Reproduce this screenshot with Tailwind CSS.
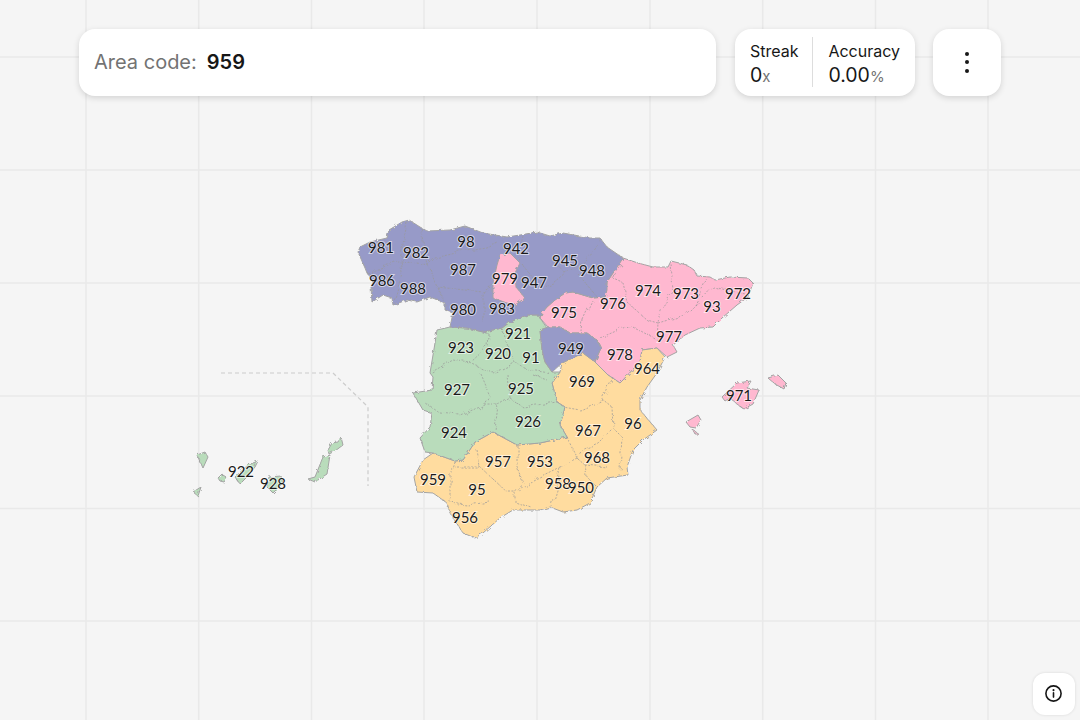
<!DOCTYPE html>
<html lang="en">
<head>
  <meta charset="UTF-8" />
  <meta name="viewport" content="width=device-width, initial-scale=1.0" />
  <title>Area code quiz</title>
  <script src="https://cdn.jsdelivr.net/npm/@tailwindcss/browser@4"></script>
</head>
<body class="relative w-[1080px] h-[720px] overflow-hidden bg-[#f5f5f5] font-['Inter',sans-serif]">

  <!-- map canvas -->
  <svg class="absolute inset-0" width="1080" height="720" viewBox="0 0 1080 720">
    <defs>
      <filter id="rough" x="-5%" y="-5%" width="110%" height="110%" color-interpolation-filters="sRGB">
        <feTurbulence type="fractalNoise" baseFrequency="0.28" numOctaves="2" seed="4" />
        <feDisplacementMap in="SourceGraphic" scale="3.5" />
      </filter>
      <filter id="wiggle" x="-5%" y="-5%" width="110%" height="110%" color-interpolation-filters="sRGB">
        <feTurbulence type="fractalNoise" baseFrequency="0.09" numOctaves="2" seed="9" />
        <feDisplacementMap in="SourceGraphic" scale="7" />
      </filter>
    </defs>

    <!-- grid -->
    <g class="stroke-[#e9e9e9]" stroke-width="1.5">
      <path d="M86 0V720M198.7 0V720M311.5 0V720M424 0V720M537 0V720M650 0V720M762.7 0V720M875.5 0V720M988 0V720" />
      <path d="M0 57H1080M0 170H1080M0 283H1080M0 396H1080M0 508.5H1080M0 621H1080" />
    </g>

    <!-- canary islands inset line -->
    <path d="M221 373H333L368 407V486" fill="none" class="stroke-[#cccccc]" stroke-width="1.2" stroke-dasharray="4 3" />

    <g filter="url(#rough)" class="stroke-[#a3a3a3]" stroke-width="1" stroke-linejoin="round">
      <!-- pink -->
      <g class="fill-[#ffb8d0]">
        <path d="M623 258L638 263L653 267L668 267L671 261L687 265L694 270L697 276L710 277L715 280L730 277L748 278L753 283L748 297L737 305L722 318L713 327L700 328L685 335L673 345L677 352L667 357L657 348L642 350L640 362L623 380L620 383L608 375L593 365L597 357L601 348L597 340L587 333L570 333L560 327L548 327L540 318L542 313L547 307L555 300L565 293L573 292L583 295L593 298L605 297L607 282L615 270Z" />
        <path d="M722 397L737 383L751 381L747 388L759 390L753 404L744 409L737 404L730 398L725 401Z" />
        <path d="M768 378L778 375L786 383L784 389L775 384Z" />
        <path d="M686 422L698 415L701 420L696 428L690 427Z" />
        <path d="M693 430L699 434L695 434Z" />
      </g>
      <!-- orange -->
      <path class="fill-[#ffdc9f]" d="M665 357L657 373L647 387L640 400L640 410L657 430L643 440L633 450L627 467L628 475L607 478L597 487L590 503L577 510L563 512L550 507L540 510L513 510L500 518L483 533L475 538L463 533L450 513L447 503L433 493L417 492L414 477L423 460L433 453L455 461L463 460L475 442L493 432L517 445L540 443L567 437L560 425L565 407L557 402L552 383L560 372L562 363L583 353L595 362L608 375L620 383L623 380L640 362L642 350L657 348Z" />
      <!-- green -->
      <g class="fill-[#b9dcbb]">
        <path d="M540 315L527 315L510 322L502 328L483 332L467 328L450 327L437 330L435 343L430 373L433 377L432 390L413 393L423 410L432 413L430 427L420 438L425 452L433 453L455 461L463 460L475 442L493 432L517 445L540 443L567 437L560 425L565 407L557 402L552 383L560 372L552 372L545 362L542 350L540 330L547 328L540 318Z" />
        <path d="M197 455L205 452L208 457L203 468Z" />
        <path d="M218 478L222 474L227 478L224 482L220 481Z" />
        <path d="M193 492L201 487L198 496Z" />
        <path d="M235 477L248 465L258 461L255 467L245 479L240 484Z" />
        <path d="M267 487L269 477L281 476L283 483L273 493Z" />
        <path d="M308 479L315 477L323 457L330 455L327 474L315 482Z" />
        <path d="M328 450L332 443L338 442L341 437L343 445L335 451L329 454Z" />
      </g>
      <!-- blue -->
      <g class="fill-[#979ac8]">
        <path d="M358 252L360 247L370 242L387 238L389 230L402 222L409 220L420 227L427 231L450 230L465 226L483 233L507 237L520 235L537 232L550 236L563 233L590 238L600 238L607 247L623 258L615 270L607 282L607 290L605 297L593 298L583 295L573 292L565 293L555 300L547 307L542 313L540 315L527 315L510 322L502 328L483 332L467 328L450 327L453 313L445 310L445 303L430 297L417 302L407 300L393 305L392 298L383 295L372 302L371 287L373 282L367 273L365 268Z" />
        <path d="M540 330L548 327L560 327L570 333L587 333L597 340L601 348L597 357L595 362L583 353L562 363L552 372L545 362L542 350Z" />
      </g>
      <path class="fill-[#ffb8d0]" d="M497 265L500 255L510 253L517 260L520 263L515 273L516 287L525 298L515 305L507 303L493 298L493 283Z" />
    </g>

    <!-- province borders -->
    <g filter="url(#wiggle)" fill="none" class="stroke-[#999999]/80" stroke-width="0.9" stroke-dasharray="2 1.5">
      <path d="M407 223L400 260L402 273L393 305M367 273L383 267L400 260L428 265L435 258L460 252L487 248L498 243M420 227L428 265L437 287L445 303M437 287L483 292L483 323M483 292L493 285M523 236L517 260M521 263L540 287L553 283L565 273L583 263L600 240M550 257L565 273M577 273L598 298" />
      <path d="M622 265L612 278L623 283L628 303L647 320L658 323L660 310L673 292L671 263M658 323L685 315L695 305L707 278M695 305L703 298L713 287L750 295M583 320L592 300M583 320L582 332M600 338L630 325L657 340L658 323" />
      <path d="M488 333L487 347L470 363L453 360L430 373M503 332L515 363L530 370L550 373M470 363L493 373L515 363M480 373L490 397L485 405L460 415L440 413L425 403M485 405L498 405L495 430M498 405L510 398L523 407L557 402M508 375L510 398M533 375L547 380" />
      <path d="M613 377L603 400L580 410L563 407M603 400L612 407L613 428L598 443L582 450L577 458L560 467L557 490L552 507M613 428L622 437L620 470M585 465L587 477L597 487M577 458L585 465L607 467M560 467L533 480L515 492L515 502L532 508M517 445L517 467L523 483M567 437L573 450L577 458M477 450L480 467L507 492L515 492M455 462L450 480L450 503L467 505L490 502M480 467L455 467" />
    </g>

    <!-- area code labels -->
    <g text-anchor="middle" dominant-baseline="central" font-size="15" class="font-['Lato',sans-serif] fill-[#1a1a1a] stroke-white/60 [paint-order:stroke]" stroke-width="2">
      <text x="381" y="247">981</text><text x="416" y="252">982</text><text x="466" y="241">98</text><text x="516" y="248">942</text>
      <text x="565" y="260">945</text><text x="592" y="270">948</text><text x="463" y="269">987</text><text x="505" y="278">979</text>
      <text x="534" y="282">947</text><text x="382" y="280">986</text><text x="413" y="288">988</text><text x="463" y="309">980</text>
      <text x="502" y="308">983</text><text x="564" y="312">975</text><text x="613" y="303">976</text><text x="648" y="290">974</text>
      <text x="686" y="293">973</text><text x="738" y="293">972</text><text x="712" y="306">93</text><text x="669" y="336">977</text>
      <text x="518" y="333">921</text><text x="461" y="347">923</text><text x="498" y="353">920</text><text x="531" y="357">91</text>
      <text x="571" y="348">949</text><text x="620" y="354">978</text><text x="647" y="368">964</text><text x="582" y="381">969</text>
      <text x="457" y="389">927</text><text x="521" y="388">925</text><text x="739" y="395">971</text><text x="528" y="421">926</text>
      <text x="633" y="423">96</text><text x="454" y="432">924</text><text x="588" y="430">967</text><text x="597" y="457">968</text>
      <text x="498" y="461">957</text><text x="540" y="461">953</text><text x="433" y="479">959</text><text x="477" y="489">95</text>
      <text x="558" y="483">958</text><text x="581" y="487">950</text><text x="465" y="517">956</text><text x="241" y="471">922</text>
      <text x="273" y="483">928</text>
    </g>
  </svg>

  <!-- top bar -->
  <div class="absolute top-[28.5px] left-[79px] h-[67.5px] flex">
    <div class="w-[637px] bg-white rounded-2xl shadow-[0_2px_6px_rgba(0,0,0,0.14)] flex items-center pl-[15px] text-[20px]">
      <span class="text-[#737373]">Area code:</span>
      <span class="ml-[10px] font-semibold text-[#171717]">959</span>
    </div>

    <div class="ml-[19px] w-[180px] bg-white rounded-2xl shadow-[0_2px_6px_rgba(0,0,0,0.14)] flex items-center px-[15px]">
      <div class="w-[64px] h-[50px] flex flex-col justify-center pt-[3px] border-r border-[#dddddd]">
        <div class="text-[16px] leading-6 text-[#171717]">Streak</div>
        <div class="text-[19.5px] leading-6 text-[#171717]">0<span class="text-[15px] text-[#737373]">x</span></div>
      </div>
      <div class="pl-[15px] h-[50px] flex flex-col justify-center pt-[3px]">
        <div class="text-[16px] leading-6 text-[#171717]">Accuracy</div>
        <div class="text-[19.5px] leading-6 text-[#171717]">0.00<span class="text-[15px] text-[#737373]">%</span></div>
      </div>
    </div>

    <button class="ml-[18px] w-[68px] bg-white rounded-2xl shadow-[0_2px_6px_rgba(0,0,0,0.14)] flex flex-col items-center justify-center gap-[4.5px]">
      <span class="size-1 rounded-full bg-[#171717]"></span>
      <span class="size-1 rounded-full bg-[#171717]"></span>
      <span class="size-1 rounded-full bg-[#171717]"></span>
    </button>
  </div>

  <!-- info button -->
  <button class="absolute right-[5px] bottom-[5px] size-[42px] bg-white rounded-xl shadow-[0_0_3px_rgba(0,0,0,0.12)] flex items-center justify-center">
    <svg width="18" height="18" viewBox="0 0 18 18" fill="none" class="stroke-[#171717] -translate-x-[0.5px] -translate-y-[0.5px]" stroke-width="1.6" stroke-linecap="round">
      <circle cx="9" cy="9" r="7.6" />
      <path d="M9 8.4V12.6" />
      <path d="M9 5.6V5.7" stroke-width="2" />
    </svg>
  </button>
</body>
</html>
